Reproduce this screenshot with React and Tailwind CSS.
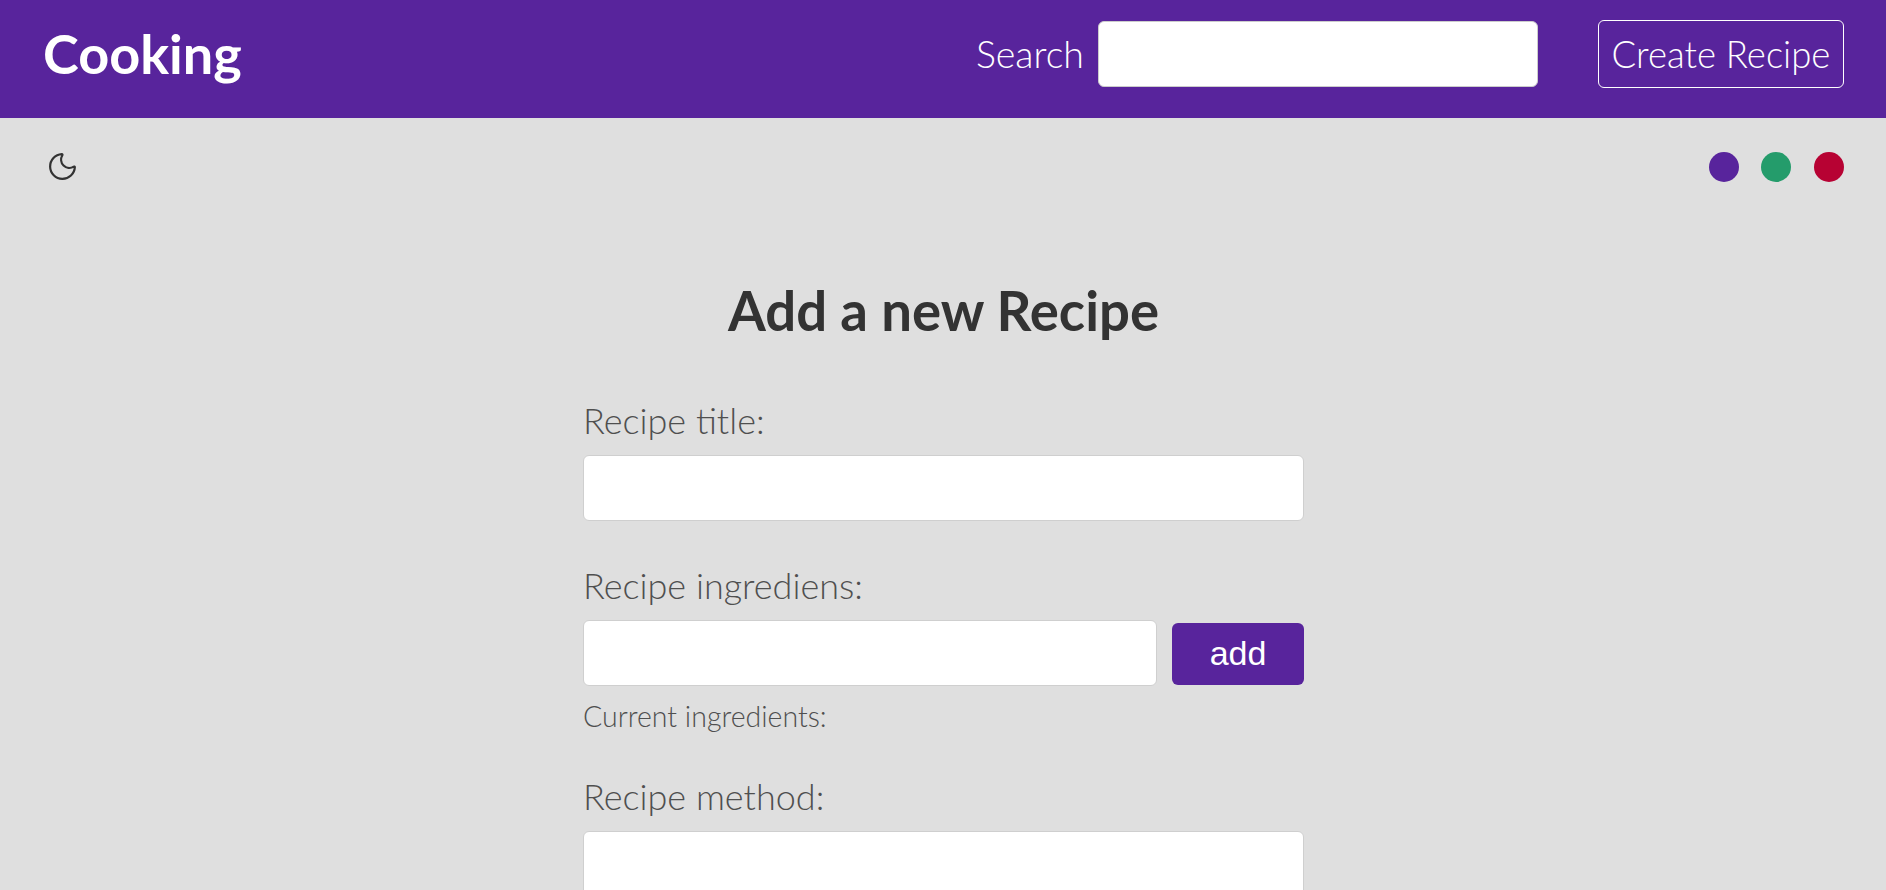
import React from "react";
import { Moon } from "lucide-react";

const fieldClass =
  "block w-full h-[66px] bg-white border border-[#cfcfcf] rounded-[6px] px-3 text-[24px] text-[#555] outline-none";
const labelClass = "block text-[36px] leading-[48px] font-light text-[#4f4f4f] mb-[11px]";

function Navbar() {
  return (
    <nav className="h-[118px] bg-[#58249c] text-white flex items-center pl-[43px] pr-[42px] pb-[10px]">
      <h1 className="text-[54px] font-bold leading-none mr-auto">Cooking</h1>
      <label className="flex items-center">
        <span className="text-[37.5px] font-light mr-[14px]">Search</span>
        <input type="text" className="w-[440px] h-[66px] bg-white border border-[#ccc] rounded-[6px] px-3 text-[#333] outline-none" />
      </label>
      <a className="ml-[60px] w-[246px] h-[68px] flex items-center justify-center border border-white rounded-[6px] text-[36.5px] font-light">
        Create Recipe
      </a>
    </nav>
  );
}

function ThemeBar() {
  return (
    <div className="flex items-center justify-between pl-[46px] pr-[42px] pt-[32px]">
      <Moon className="w-[33px] h-[33px] text-[#333]" strokeWidth={1.6} />
      <div className="flex gap-[22px]">
        <div className="w-[30px] h-[30px] rounded-full bg-[#58249c]" />
        <div className="w-[30px] h-[30px] rounded-full bg-[#249c6b] mr-[1px]" />
        <div className="w-[30px] h-[30px] rounded-full bg-[#b70233]" />
      </div>
    </div>
  );
}

export default function App() {
  return (
    <div className="h-[890px] overflow-hidden bg-[#dfdfdf] font-['Lato','Open_Sans',sans-serif]">
      <Navbar />
      <ThemeBar />
      <main className="w-[722px] pl-[1px] mx-auto mt-[96px]">
        <h2 className="text-[54.5px] leading-[62px] font-bold text-[#333] text-center">Add a new Recipe</h2>
        <form className="mt-[55px]">
          <label className="block">
            <span className={labelClass}>Recipe title:</span>
            <input type="text" className={fieldClass} />
          </label>
          <label className="block mt-[40px]">
            <span className={labelClass}>Recipe ingrediens:</span>
            <div className="flex items-center gap-[15px]">
              <input type="text" className={`${fieldClass} flex-1 min-w-0`} />
              <button type="button" className="w-[132px] h-[62px] mt-[1px] bg-[#58249c] text-white rounded-[6px] text-[34px] font-['Liberation_Sans',sans-serif]">
                add
              </button>
            </div>
          </label>
          <p className="text-[28.5px] leading-[36px] font-light text-[#4f4f4f] mt-[12px]">Current ingredients:</p>
          <label className="block mt-[38px]">
            <span className={labelClass}>Recipe method:</span>
            <textarea className="block w-full h-[140px] bg-white border border-[#cfcfcf] rounded-[6px] px-3 outline-none resize-none" />
          </label>
        </form>
      </main>
    </div>
  );
}
